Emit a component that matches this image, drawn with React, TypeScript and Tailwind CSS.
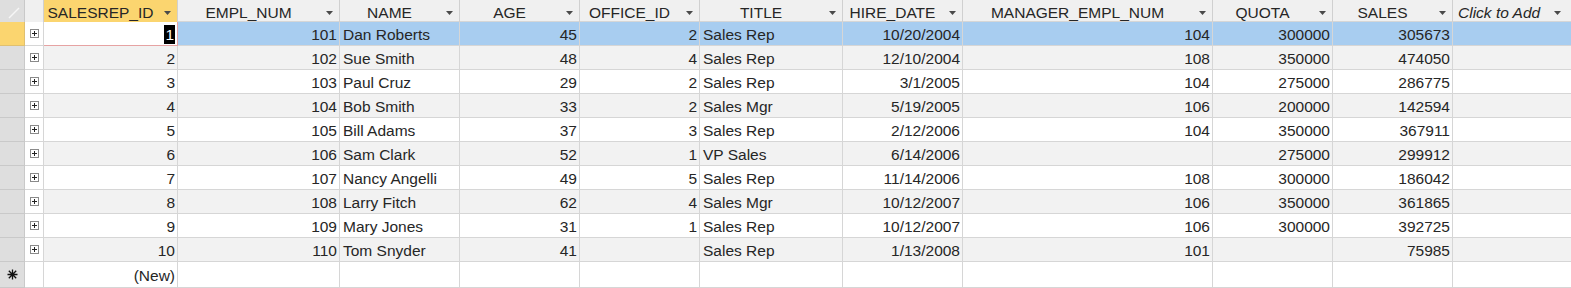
const cols =
  "grid grid-cols-[25px_19px_134px_162px_120px_120px_120px_143px_120px_250px_120px_120px_1fr]";

const headers = [
  "SALESREP_ID",
  "EMPL_NUM",
  "NAME",
  "AGE",
  "OFFICE_ID",
  "TITLE",
  "HIRE_DATE",
  "MANAGER_EMPL_NUM",
  "QUOTA",
  "SALES",
];

// id, empl, name, age, office, title, hire, manager, quota, sales
const rows: string[][] = [
  ["1", "101", "Dan Roberts", "45", "2", "Sales Rep", "10/20/2004", "104", "300000", "305673"],
  ["2", "102", "Sue Smith", "48", "4", "Sales Rep", "12/10/2004", "108", "350000", "474050"],
  ["3", "103", "Paul Cruz", "29", "2", "Sales Rep", "3/1/2005", "104", "275000", "286775"],
  ["4", "104", "Bob Smith", "33", "2", "Sales Mgr", "5/19/2005", "106", "200000", "142594"],
  ["5", "105", "Bill Adams", "37", "3", "Sales Rep", "2/12/2006", "104", "350000", "367911"],
  ["6", "106", "Sam Clark", "52", "1", "VP Sales", "6/14/2006", "", "275000", "299912"],
  ["7", "107", "Nancy Angelli", "49", "5", "Sales Rep", "11/14/2006", "108", "300000", "186042"],
  ["8", "108", "Larry Fitch", "62", "4", "Sales Mgr", "10/12/2007", "106", "350000", "361865"],
  ["9", "109", "Mary Jones", "31", "1", "Sales Rep", "10/12/2007", "106", "300000", "392725"],
  ["10", "110", "Tom Snyder", "41", "", "Sales Rep", "1/13/2008", "101", "", "75985"],
];

// text columns are left aligned, the rest right aligned
const leftAligned = [2, 5];

function Arrow() {
  return (
    <svg width="7" height="4" viewBox="0 0 7 4" className="shrink-0">
      <path d="M0 0h7L3.5 4z" fill="#4a4a4a" />
    </svg>
  );
}

function PlusBox() {
  return (
    <svg width="9" height="9" viewBox="0 0 9 9">
      <rect x="0.5" y="0.5" width="8" height="8" fill="#fff" stroke="#8a8a8a" />
      <path d="M2 4.5h5M4.5 2v5" stroke="#222" strokeWidth="1" />
    </svg>
  );
}

function NewStar() {
  return (
    <svg width="11" height="11" viewBox="0 0 11 11">
      <g stroke="#111" strokeWidth="1.3">
        <path d="M5.5 0.5v10M0.5 5.5h10M1.8 1.8l7.4 7.4M9.2 1.8l-7.4 7.4" />
      </g>
    </svg>
  );
}

function Header() {
  return (
    <div className={`${cols} h-[22px] bg-[#f0f0f0] border-b border-[#d6d6d6]`}>
      <div className="bg-[#dedede] border-r border-[#c9c9c9] flex items-center justify-center">
        <svg width="16" height="16" viewBox="0 0 16 16">
          <path d="M5 14L15 4" stroke="#f6f6f6" strokeWidth="1.5" />
        </svg>
      </div>
      <div className="border-r border-[#d0d0d0] bg-[#f0f0f0]" />
      {headers.map((h, i) => (
        <div
          key={h}
          className={`flex items-center pt-[1px] border-r border-[#d0d0d0] ${
            i === 0 ? "bg-[#fbd56f]" : ""
          }`}
        >
          <span className="flex-1 text-center whitespace-nowrap">{h}</span>
          <span className="w-[20px] flex justify-center">
            <Arrow />
          </span>
        </div>
      ))}
      <div className="flex items-center pt-[1px] pl-[5px] pr-[10px]">
        <span className="flex-1 italic whitespace-nowrap">Click to Add</span>
        <Arrow />
      </div>
    </div>
  );
}

function DataRow({ row, index }: { row: string[]; index: number }) {
  const selected = index === 0;
  const bg = selected ? "bg-[#a8cdf0]" : index % 2 === 1 ? "bg-[#f2f2f2]" : "bg-white";
  return (
    <div className={`${cols} h-[24px]`}>
      <div
        className={`border-r border-b ${
          selected ? "bg-[#fbd56f] border-[#e0c070]" : "bg-[#dedede] border-[#c9c9c9]"
        }`}
      />
      <div className="bg-white border-r border-b border-[#d6d6d6] flex items-center justify-center">
        <PlusBox />
      </div>
      {row.map((v, i) => {
        const active = selected && i === 0;
        return (
          <div
            key={i}
            className={`flex items-center pt-[2px] border-b border-r whitespace-nowrap overflow-hidden ${
              leftAligned.includes(i) ? "justify-start pl-[3px]" : "justify-end pr-[2px]"
            } ${active ? "bg-white border-[#e6a3a3]" : `${bg} border-[#d6d6d6]`}`}
          >
            {active ? <span className="bg-black text-white px-[1px] leading-[19px]">{v}</span> : v}
          </div>
        );
      })}
      <div className={`border-b border-[#d6d6d6] ${bg}`} />
    </div>
  );
}

function NewRow() {
  return (
    <div className={`${cols} h-[24px] bg-white`}>
      <div className="bg-[#dedede] border-r border-b border-[#c9c9c9] flex items-center justify-center">
        <NewStar />
      </div>
      <div className="border-r border-b border-[#d6d6d6]" />
      <div className="border-r border-b border-[#d6d6d6] flex items-center pt-[2px] justify-end pr-[2px]">
        (New)
      </div>
      {Array.from({ length: 9 }).map((_, i) => (
        <div key={i} className="border-r border-b border-[#d6d6d6]" />
      ))}
      <div className="border-b border-[#d6d6d6]" />
    </div>
  );
}

export default function App() {
  return (
    <div className="w-[1571px] h-[288px] bg-white overflow-hidden font-['Liberation_Sans',Arial,sans-serif] text-[15.5px] text-[#262626]">
      <Header />
      {rows.map((r, i) => (
        <DataRow key={i} row={r} index={i} />
      ))}
      <NewRow />
    </div>
  );
}
